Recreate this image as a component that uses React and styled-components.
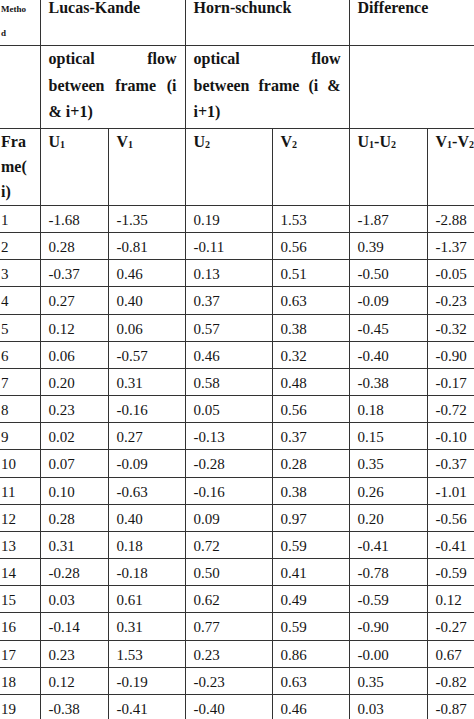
import { createGlobalStyle, styled } from "styled-components";

const GlobalStyle = createGlobalStyle`
  html, body {
    margin: 0;
    padding: 0;
    background: #ffffff;
    overflow: hidden;
    font-family: "Liberation Serif", "DejaVu Serif", serif;
  }
`;

const COLS = [40, 68, 77, 87, 77, 78, 80];

const ROWS = [
  ["1", "-1.68", "-1.35", "0.19", "1.53", "-1.87", "-2.88"],
  ["2", "0.28", "-0.81", "-0.11", "0.56", "0.39", "-1.37"],
  ["3", "-0.37", "0.46", "0.13", "0.51", "-0.50", "-0.05"],
  ["4", "0.27", "0.40", "0.37", "0.63", "-0.09", "-0.23"],
  ["5", "0.12", "0.06", "0.57", "0.38", "-0.45", "-0.32"],
  ["6", "0.06", "-0.57", "0.46", "0.32", "-0.40", "-0.90"],
  ["7", "0.20", "0.31", "0.58", "0.48", "-0.38", "-0.17"],
  ["8", "0.23", "-0.16", "0.05", "0.56", "0.18", "-0.72"],
  ["9", "0.02", "0.27", "-0.13", "0.37", "0.15", "-0.10"],
  ["10", "0.07", "-0.09", "-0.28", "0.28", "0.35", "-0.37"],
  ["11", "0.10", "-0.63", "-0.16", "0.38", "0.26", "-1.01"],
  ["12", "0.28", "0.40", "0.09", "0.97", "0.20", "-0.56"],
  ["13", "0.31", "0.18", "0.72", "0.59", "-0.41", "-0.41"],
  ["14", "-0.28", "-0.18", "0.50", "0.41", "-0.78", "-0.59"],
  ["15", "0.03", "0.61", "0.62", "0.49", "-0.59", "0.12"],
  ["16", "-0.14", "0.31", "0.77", "0.59", "-0.90", "-0.27"],
  ["17", "0.23", "1.53", "0.23", "0.86", "-0.00", "0.67"],
  ["18", "0.12", "-0.19", "-0.23", "0.63", "0.35", "-0.82"],
  ["19", "-0.38", "-0.41", "-0.40", "0.46", "0.03", "-0.87"],
];

const Table = styled.table`
  border-collapse: collapse;
  table-layout: fixed;
  width: ${COLS.reduce((a, b) => a + b, 0)}px;
  color: #141414;
`;

const Row = styled.tr`
  height: ${(p) => p.$h}px;
`;

const Cell = styled.td`
  font-family: "Liberation Serif", "DejaVu Serif", serif;
  border: 1px solid #333333;
  padding: ${(p) => (p.$first ? "0 0 0 1px" : "0 8px")};
  vertical-align: top;
  overflow: hidden;
  ${(p) => p.$first && "border-left: none;"}
  ${(p) => p.$top && "border-top: none;"}
`;

const HeadCell = styled(Cell)`
  font-weight: bold;
  font-size: 16px;
  line-height: ${(p) => p.$lh || 25}px;
`;

const DataCell = styled(Cell)`
  font-size: 15px;
  line-height: 20px;
  padding-top: 4px;
`;

const MethodLabel = styled.div`
  font-size: 9px;
  font-weight: bold;
  line-height: 24px;
  margin-top: -3px;
`;

const Line = styled.span`
  display: block;
  text-align: justify;
  text-align-last: ${(p) => (p.$last ? "left" : "justify")};
`;

const Sub = styled.sub`
  font-size: 10px;
  vertical-align: -1px;
  line-height: 0;
`;

function FlowText({ lines }) {
  return lines.map((l, i) => (
    <Line key={i} $last={i === lines.length - 1}>
      {l}
    </Line>
  ));
}

export default function App() {
  return (
    <>
      <GlobalStyle />
      <Table>
        <colgroup>
          {COLS.map((w, i) => (
            <col key={i} style={{ width: w }} />
          ))}
        </colgroup>
        <tbody>
          <Row $h={44}>
            <HeadCell $first $top $lh={15}>
              <MethodLabel>
                Metho
                <br />d
              </MethodLabel>
            </HeadCell>
            <HeadCell $top $lh={15} colSpan={2}>
              Lucas-Kande
            </HeadCell>
            <HeadCell $top $lh={15} colSpan={2}>
              Horn-schunck
            </HeadCell>
            <HeadCell $top $lh={15} colSpan={2}>
              Difference
            </HeadCell>
          </Row>
          <Row $h={83}>
            <HeadCell $first />
            <HeadCell $lh={26.5} colSpan={2}>
              <FlowText
                lines={["optical flow", "between frame (i", "& i+1)"]}
              />
            </HeadCell>
            <HeadCell $lh={26.5} colSpan={2}>
              <FlowText
                lines={["optical flow", "between frame (i &", "i+1)"]}
              />
            </HeadCell>
            <HeadCell colSpan={2} />
          </Row>
          <Row $h={77}>
            <HeadCell $first>
              Fra
              <br />
              me(
              <br />
              i)
            </HeadCell>
            <HeadCell>
              U<Sub>1</Sub>
            </HeadCell>
            <HeadCell>
              V<Sub>1</Sub>
            </HeadCell>
            <HeadCell>
              U<Sub>2</Sub>
            </HeadCell>
            <HeadCell>
              V<Sub>2</Sub>
            </HeadCell>
            <HeadCell>
              U<Sub>1</Sub>-U<Sub>2</Sub>
            </HeadCell>
            <HeadCell>
              V<Sub>1</Sub>-V<Sub>2</Sub>
            </HeadCell>
          </Row>
          {ROWS.map((r) => (
            <Row key={r[0]} $h={27.17}>
              {r.map((v, j) => (
                <DataCell key={j} $first={j === 0}>
                  {v}
                </DataCell>
              ))}
            </Row>
          ))}
        </tbody>
      </Table>
    </>
  );
}
